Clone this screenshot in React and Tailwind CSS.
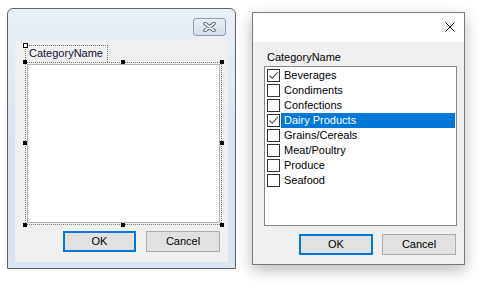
import React from 'react';

const font = { fontFamily: '"Liberation Sans", Arial, sans-serif' };

const items = [
  { name: 'Beverages', checked: true },
  { name: 'Condiments', checked: false },
  { name: 'Confections', checked: false },
  { name: 'Dairy Products', checked: true, selected: true },
  { name: 'Grains/Cereals', checked: false },
  { name: 'Meat/Poultry', checked: false },
  { name: 'Produce', checked: false },
  { name: 'Seafood', checked: false },
];

function Handle({ className }) {
  return <div className={`absolute w-[4px] h-[4px] bg-black ${className}`} />;
}

function DesignerWindow() {
  return (
    <div className="mt-[8px] ml-[7px] w-[229px] h-[261px] border border-[#5f6165] rounded-t-[6px] bg-linear-to-b from-[#eaf0f7] via-[#dae5f2] to-[#dae5f2] px-[7px] pb-[6px] flex flex-col">
      <div className="h-[30px] flex justify-end items-start pt-[9px] pr-[2px]">
        <div className="w-[33px] h-[18px] rounded-[3px] border border-[#8d9bb0] bg-linear-to-b from-[#edf1f6] to-[#d3dce8] flex items-center justify-center">
          <svg width="13" height="10" viewBox="0 0 13 10">
            <path d="M2 1.5 L11 8.5 M11 1.5 L2 8.5" stroke="#5b6574" strokeWidth="3.6" strokeLinecap="round" />
            <path d="M2 1.5 L11 8.5 M11 1.5 L2 8.5" stroke="#ffffff" strokeWidth="1.6" strokeLinecap="round" />
          </svg>
        </div>
      </div>
      <div className="flex-1 bg-[#f0f0f0] pt-[6px] pl-[10px] flex flex-col">
        <div className="relative w-[83px] h-[17px] border-t border-l border-r border-dotted border-[#777] pl-[3px] text-[11px] leading-[15px] text-[#101030]">
          CategoryName
          <div className="absolute -left-[3px] -top-[3px] w-[5px] h-[5px] bg-white border border-black" />
        </div>
        <div className="relative w-[197px] h-[163px] border border-dotted border-[#777] p-[1px]">
          <div className="w-full h-full bg-white border border-[#b4b4b4]" />
          <Handle className="-left-[3px] -top-[3px]" />
          <Handle className="left-[95px] -top-[3px]" />
          <Handle className="-right-[3px] -top-[3px]" />
          <Handle className="-left-[3px] top-[78px]" />
          <Handle className="-right-[3px] top-[78px]" />
          <Handle className="-left-[3px] -bottom-[3px]" />
          <Handle className="left-[95px] -bottom-[3px]" />
          <Handle className="-right-[3px] -bottom-[3px]" />
        </div>
        <div className="mt-[6px] flex justify-end gap-[10px] pr-[8px]">
          <button className="w-[73px] h-[21px] border-2 border-[#0078d7] bg-[#e1e1e1] text-[11px] text-black">OK</button>
          <button className="w-[74px] h-[21px] border border-[#adadad] bg-[#e1e1e1] text-[11px] text-black">Cancel</button>
        </div>
      </div>
    </div>
  );
}

function CheckBox({ checked }) {
  return (
    <div className="w-[13px] h-[13px] border border-[#333] bg-white shrink-0 flex items-center justify-center">
      {checked && (
        <svg width="11" height="11" viewBox="0 0 11 11">
          <path d="M1.5 5.5 L4.2 8.2 L9.8 2.2" fill="none" stroke="#555" strokeWidth="1.1" />
        </svg>
      )}
    </div>
  );
}

function RuntimeWindow() {
  return (
    <div className="mt-[12px] ml-[16px] w-[213px] h-[253px] border border-[#7a7a7a] bg-[#f0f0f0] flex flex-col shadow-[0_5px_14px_rgba(0,0,0,0.28)]">
      <div className="h-[29px] bg-white flex justify-end items-start pt-[9px] pr-[9px]">
        <svg width="10" height="10" viewBox="0 0 10 10">
          <path d="M0.5 0.5 L9.5 9.5 M9.5 0.5 L0.5 9.5" stroke="#000" strokeWidth="1" />
        </svg>
      </div>
      <div className="flex-1 flex flex-col pt-[8px]">
        <div className="h-[16px] pl-[14px] text-[11px] leading-[15px] text-black">CategoryName</div>
        <div className="ml-[11px] w-[193px] h-[160px] border border-[#828790] bg-white pt-[1px]">
          {items.map((it) => (
            <div key={it.name} className="h-[15px] flex items-center pl-[2px]">
              <CheckBox checked={it.checked} />
              <div
                className={`flex-1 h-[15px] ml-[1px] mr-[1px] pl-[3px] text-[11px] leading-[15px] ${
                  it.selected ? 'bg-[#0078d7] text-white' : 'text-black'
                }`}
              >
                {it.name}
              </div>
            </div>
          ))}
        </div>
        <div className="mt-[8px] flex justify-end gap-[9px] pr-[8px]">
          <button className="w-[74px] h-[21px] border-2 border-[#0078d7] bg-[#e1e1e1] text-[11px] text-black">OK</button>
          <button className="w-[74px] h-[21px] border border-[#adadad] bg-[#e1e1e1] text-[11px] text-black">Cancel</button>
        </div>
      </div>
    </div>
  );
}

export default function App() {
  return (
    <div className="w-[493px] h-[290px] bg-white flex items-start overflow-hidden" style={font}>
      <DesignerWindow />
      <RuntimeWindow />
    </div>
  );
}
